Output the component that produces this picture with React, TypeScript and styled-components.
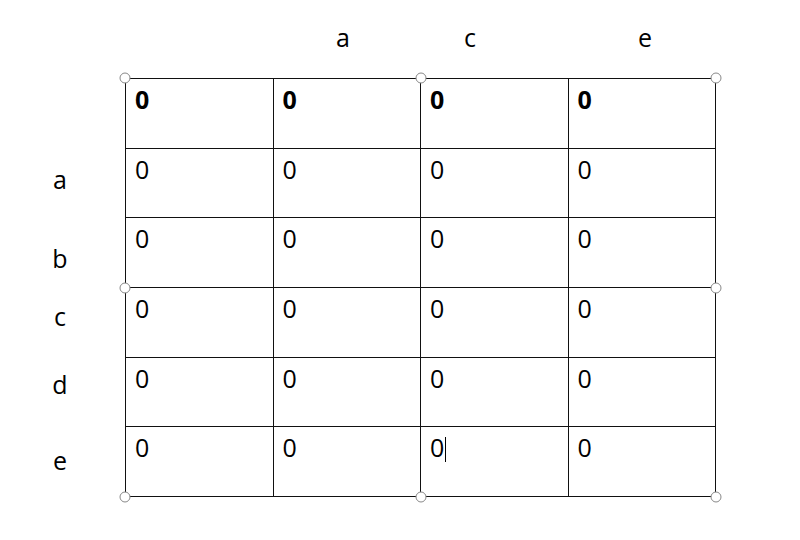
import React from 'react'
import styled, { createGlobalStyle } from 'styled-components'

const GlobalStyle = createGlobalStyle`
  html, body {
    margin: 0;
    padding: 0;
    background: #ffffff;
  }
  body {
    font-family: "Open Sans", "Noto Sans", "DejaVu Sans", sans-serif;
    color: #000;
  }
`

const topLabels = [
  { text: 'a', space: 198 },
  { text: 'c', space: 87 },
  { text: 'e', space: 135 },
]

const sideLabels = [
  { text: 'a', space: 86 },
  { text: 'b', space: 49 },
  { text: 'c', space: 28 },
  { text: 'd', space: 38 },
  { text: 'e', space: 46 },
]

const rows = 6
const cols = 4

// selection handles around the table: [x%, y%]
const handles: [number, number][] = [
  [0, 0], [50, 0], [100, 0],
  [0, 50.2], [100, 50.2],
  [0, 100], [50, 100], [100, 100],
]

export default function App() {
  return (
    <>
      <GlobalStyle />
      <Page>
        <Corner />
        <TopLabels>
          {topLabels.map((l, i) => (
            <TopLabel key={i} $space={l.space}>{l.text}</TopLabel>
          ))}
        </TopLabels>
        <SideLabels>
          {sideLabels.map((l, i) => (
            <SideLabel key={i} $space={l.space}>{l.text}</SideLabel>
          ))}
        </SideLabels>
        <TableFrame>
          <Grid>
            {Array.from({ length: rows * cols }).map((_, i) => {
              const r = Math.floor(i / cols)
              const c = i % cols
              return (
                <Cell key={i} $bold={r === 0}>
                  0{r === rows - 1 && c === 2 && <Caret />}
                </Cell>
              )
            })}
          </Grid>
          {handles.map(([x, y], i) => (
            <Handle key={i} $x={x} $y={y} />
          ))}
        </TableFrame>
      </Page>
    </>
  )
}

const Page = styled.div`
  display: grid;
  grid-template-columns: 125px 591px;
  grid-template-rows: 78px 419px;
  width: 800px;
  height: 540px;
`

const Corner = styled.div``

const TopLabels = styled.div`
  display: flex;
  align-items: center;
  padding-bottom: 5px;
`

const TopLabel = styled.span<{ $space: number }>`
  width: 40px;
  margin-left: ${({ $space }) => $space}px;
  text-align: center;
  font-size: 25px;
  line-height: 30px;
`

const SideLabels = styled.div`
  display: flex;
  flex-direction: column;
  padding-left: 2px;
`

const SideLabel = styled.span<{ $space: number }>`
  width: 116px;
  height: 30px;
  margin-top: ${({ $space }) => $space}px;
  text-align: center;
  font-size: 25px;
  line-height: 30px;
`

const TableFrame = styled.div`
  position: relative;
  width: 591px;
  height: 419px;
`

const Grid = styled.div`
  display: grid;
  grid-template-columns: repeat(4, 1fr);
  grid-template-rows: repeat(6, 1fr);
  gap: 1px;
  padding: 1px;
  box-sizing: border-box;
  width: 100%;
  height: 100%;
  background: #111;
`

const Cell = styled.div<{ $bold: boolean }>`
  background: #fff;
  padding: 3px 0 0 9px;
  font-size: 25px;
  line-height: 34px;
  font-weight: ${({ $bold }) => ($bold ? 700 : 400)};
`

const Caret = styled.span`
  display: inline-block;
  width: 1px;
  height: 25px;
  margin-left: 1px;
  background: #000;
  vertical-align: -5px;
`

const Handle = styled.span<{ $x: number; $y: number }>`
  position: absolute;
  left: ${({ $x }) => $x}%;
  top: ${({ $y }) => $y}%;
  width: 9px;
  height: 9px;
  border: 1.6px solid #888;
  border-radius: 50%;
  background: #fff;
  transform: translate(-50%, -50%);
`
